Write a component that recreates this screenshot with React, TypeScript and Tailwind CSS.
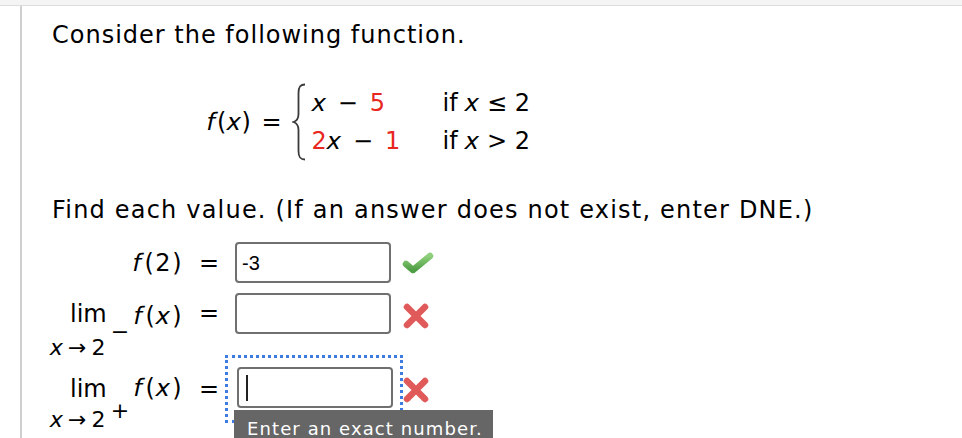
import React from "react";

const font = { fontFamily: '"DejaVu Sans", Verdana, sans-serif' };

// DejaVu has no oblique face here, so slant the glyph
function I({ children }: { children: React.ReactNode }) {
  return <span className="inline-block -skew-x-12">{children}</span>;
}

function Check() {
  return (
    <svg width="32" height="24" viewBox="0 0 32 24">
      <defs>
        <linearGradient id="ck" x1="0" y1="0" x2="0" y2="1">
          <stop offset="0" stopColor="#8fd07c" />
          <stop offset="1" stopColor="#4f9d45" />
        </linearGradient>
      </defs>
      <path d="M4 13 L11 19 L28 5" fill="none" stroke="url(#ck)" strokeWidth="6.5" strokeLinecap="round" strokeLinejoin="round" />
    </svg>
  );
}

function Cross() {
  return (
    <svg width="28" height="28" viewBox="0 0 28 28">
      <path d="M5 5 L23 23 M23 5 L5 23" fill="none" stroke="#e05a5a" strokeWidth="6.5" strokeLinecap="round" />
    </svg>
  );
}

function Brace() {
  return (
    <svg width="14" height="78" viewBox="0 0 14 78" className="ml-[10px]">
      <path
        d="M13 1.5 C8 1.5 6.5 4 6.5 10 L6.5 31 C6.5 36 4.5 38 1.5 39 C4.5 40 6.5 42 6.5 47 L6.5 68 C6.5 74 8 76.5 13 76.5"
        fill="none"
        stroke="#3a3a3a"
        strokeWidth="1.8"
      />
    </svg>
  );
}

function Lim({ side, top, gap, sideTop }: { side: string; top: string; gap: string; sideTop: string }) {
  return (
    <div className={`flex items-start tracking-normal ${top}`}>
      <div className="flex flex-col">
        <span className="leading-[28px] pl-[20px]">lim</span>
        <span className={`text-[22px] leading-[26px] ${gap}`}>
          <I>x</I>
          <span className="px-[5px]">→</span>2
        </span>
      </div>
      <span className={`ml-[4px] text-[22px] leading-[22px] ${sideTop}`}>{side}</span>
    </div>
  );
}

function Fx({ top }: { top: string }) {
  return (
    <span className={`leading-[28px] tracking-[1.5px] ${top}`}>
      <I>f</I>
      <span className="ml-[2px]">(</span>
      <I>x</I>)
    </span>
  );
}

function Box({ children }: { children?: React.ReactNode }) {
  return (
    <div className="w-[156px] h-[41px] border-2 border-[#707070] rounded-[4px] flex items-center pl-[5px]">
      {children}
    </div>
  );
}

export default function App() {
  return (
    <div className="w-[962px] h-[438px] overflow-hidden bg-white text-black" style={font}>
      <div className="h-[6px] bg-[#f4f4f4] border-b border-[#dcdcdc]" />
      <div className="flex h-full">
        <div className="w-[20px]" />
        <div className="border-l-2 border-[#cfcfcf] pl-[30px] pt-[14px] text-[24px] tracking-[1px] flex-1">
          <p className="leading-[30px]">Consider the following function.</p>

          <div className="flex items-center mt-[33px] ml-[155px]">
            <span className="leading-[30px] tracking-[0.5px]">
              <I>f</I>
              <span className="ml-[1px]">(</span>
              <I>x</I>)
            </span>
            <span className="ml-[10px] tracking-normal">=</span>
            <Brace />
            <div className="grid grid-cols-[131px_auto] leading-[38px] ml-[6px] tracking-normal">
              <span>
                <I>x</I>
                <span className="mx-[12px]">−</span>
                <span className="text-[#e8281f]">5</span>
              </span>
              <span>
                if <I>x</I> ≤ 2
              </span>
              <span>
                <span className="text-[#e8281f]">2</span>
                <I>x</I>
                <span className="mx-[12px]">−</span>
                <span className="text-[#e8281f]">1</span>
              </span>
              <span>
                if <I>x</I> &gt; 2
              </span>
            </div>
          </div>

          <p className="mt-[34px] leading-[30px] tracking-[1.2px]">
            Find each value. (If an answer does not exist, enter DNE.)
          </p>

          <div className="flex flex-col mt-[17px] -ml-[2px] tracking-normal">
            <div className="flex h-[41px]">
              <div className="w-[133px] flex justify-end items-center">
                <span className="tracking-[1.5px]">
                  <I>f</I>
                  <span className="ml-[2px]">(</span>2)
                </span>
              </div>
              <div className="w-[52px] flex justify-center items-center">=</div>
              <div className="flex items-center gap-[11px]">
                <Box>
                  <span className="text-[20px]" style={{ fontFamily: '"Liberation Sans", Arial, sans-serif' }}>
                    -3
                  </span>
                </Box>
                <Check />
              </div>
            </div>

            <div className="flex h-[72px]">
              <div className="w-[133px] flex justify-between items-start">
                <Lim side="−" top="mt-[17px]" gap="mt-[7px]" sideTop="mt-[21px]" />
                <Fx top="mt-[19px]" />
              </div>
              <div className="w-[52px] flex justify-center items-start">
                <span className="mt-[16px] leading-[28px]">=</span>
              </div>
              <div className="flex items-start gap-[11px] mt-[10px]">
                <Box />
                <div className="mt-[9px]">
                  <Cross />
                </div>
              </div>
            </div>

            <div className="flex h-[83px]">
              <div className="w-[133px] flex justify-between items-start">
                <Lim side="+" top="mt-[20px]" gap="mt-[4px]" sideTop="mt-[25px]" />
                <Fx top="mt-[19px]" />
              </div>
              <div className="w-[52px] flex justify-center items-start">
                <span className="mt-[20px] leading-[28px]">=</span>
              </div>
              <div className="relative -ml-[10px]">
                <div className="flex items-start border-[3px] border-dotted border-[#3d7be0] w-[178px] h-[68px] pl-[9px] pt-[9px]">
                  <Box>
                    <div className="w-[2px] h-[26px] bg-[#222] ml-[2px]" />
                  </Box>
                </div>
                <div className="absolute left-[177px] top-[21px]">
                  <Cross />
                </div>
                <div className="absolute left-[9px] top-[55px] bg-[#666] text-white text-[18px] tracking-[1.1px] leading-[24px] pl-[13px] pr-[10px] pt-[7px] pb-[4px] whitespace-nowrap">
                  Enter an exact number.
                </div>
              </div>
            </div>
          </div>
        </div>
      </div>
    </div>
  );
}
